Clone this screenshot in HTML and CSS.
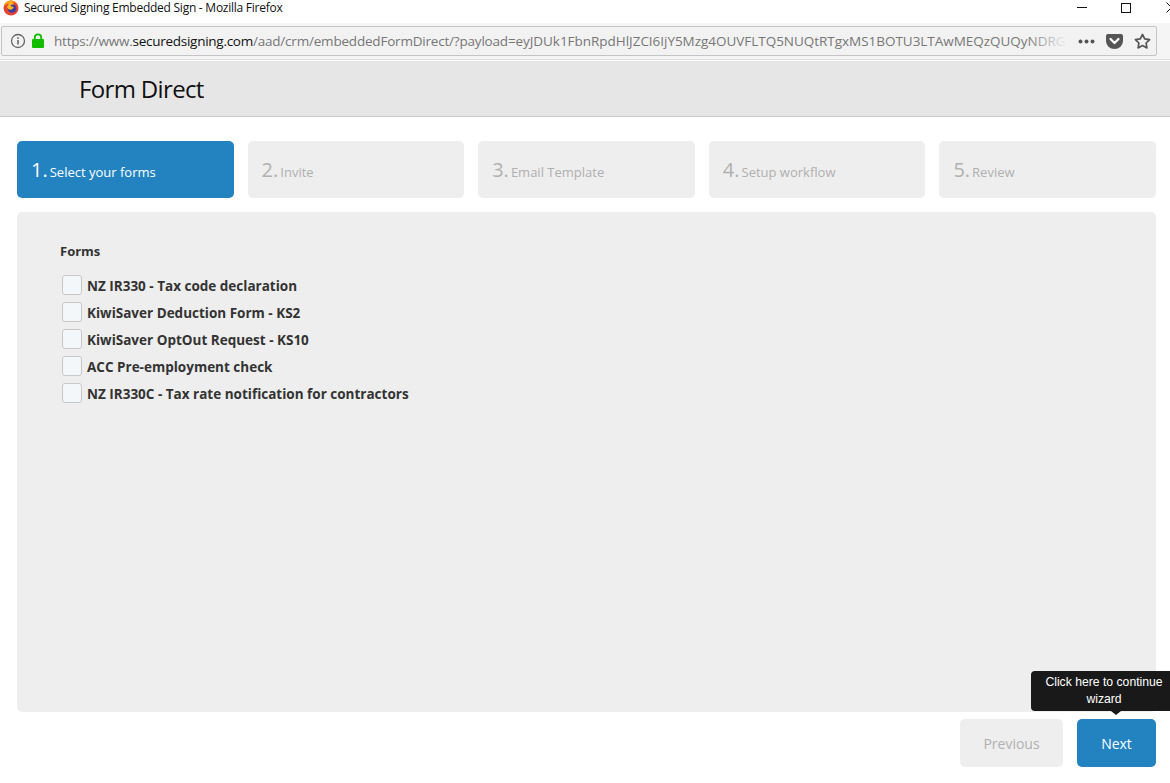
FILE: index.html
```html
<!DOCTYPE html>
<html lang="en">
<head>
<meta charset="utf-8">
<title>Secured Signing Embedded Sign - Mozilla Firefox</title>
<link rel="stylesheet" href="styles.css">
</head>
<body>
<div class="titlebar">
  <svg class="fx-logo" width="16" height="16" viewBox="0 0 16 16">
    <circle cx="8" cy="8" r="7.500" fill="#e8432e"/>
    <path d="M.8 6C1.500 2.800 4.500.5 8 .5c2.500 0 4.500 1 6 3-2-1-5-1.500-7 0C4.500 3.800 2.500 4.500.8 6z" fill="#ff9f1c"/>
    <circle cx="9" cy="8.500" r="4.300" fill="#3f3a9e"/>
    <path d="M6.500 1.500c2.300.5 4 1.700 4.700 3.300C9.700 4.200 8 4.600 7.500 6c.9.700 2.300.5 3.200 1.100-.4 1.800-2.100 2.900-3.900 2.500C5 9.200 4 7.800 4.200 6.200 5 5 6.300 3.800 6.500 1.500z" fill="#ffb81f"/>
  </svg>
  <span class="title-text">Secured Signing Embedded Sign - Mozilla Firefox</span>
  <div class="win-controls">
    <span class="win-min"></span>
    <span class="win-max"></span>
    <svg class="win-close" width="11" height="11" viewBox="0 0 11 11"><path d="M.5.500l10 10M10.500.500l-10 10" stroke="#111" fill="none"/></svg>
  </div>
</div>
<div class="toolbar">
  <div class="urlbar">
    <svg class="ic-info" width="16" height="16" viewBox="0 0 16 16">
      <circle cx="8" cy="8" r="6.500" fill="none" stroke="#666" stroke-width="1.300"/>
      <rect x="7.200" y="7" width="1.600" height="4.500" fill="#666"/>
      <rect x="7.200" y="4.300" width="1.600" height="1.600" fill="#666"/>
    </svg>
    <svg class="ic-lock" width="14" height="15" viewBox="0 0 14 15">
      <rect x="1" y="6" width="12" height="9" rx="1" fill="#12bc00"/>
      <path d="M3.800 6.500V4.500a3.200 3.200 0 0 1 6.400 0v2" fill="none" stroke="#12bc00" stroke-width="1.800"/>
    </svg>
    <div class="url"><span class="url-dim">https://www.</span><span class="url-host">securedsigning.com</span><span class="url-dim">/aad/crm/embeddedFormDirect/?payload=</span><span class="url-dim url-payload">eyJDUk1FbnRpdHlJZCI6IjY5Mzg4OUVFLTQ5NUQtRTgxMS1BOTU3LTAwMEQzQUQyNDRG</span><span class="url-fade"></span></div>
    <div class="url-actions">
      <svg width="17" height="5" viewBox="0 0 17 5"><circle cx="2.500" cy="2.500" r="2" fill="#555"/><circle cx="8.500" cy="2.500" r="2" fill="#555"/><circle cx="14.500" cy="2.500" r="2" fill="#555"/></svg>
      <svg width="17" height="15" viewBox="0 0 17 15"><path d="M2 0h13a2 2 0 0 1 2 2v5a8.500 8 0 0 1-17 0V2a2 2 0 0 1 2-2z" fill="#555"/><path d="M4.500 5l4 4 4-4" fill="none" stroke="#fff" stroke-width="2.200" stroke-linecap="round" stroke-linejoin="round"/></svg>
      <svg width="17" height="16" viewBox="0 0 17 16"><path d="M8.500 1.400l2.200 4.500 4.900.7-3.500 3.400.8 4.900-4.400-2.300-4.400 2.300.8-4.900L1.400 6.600l4.900-.7z" fill="none" stroke="#555" stroke-width="1.700" stroke-linejoin="round"/></svg>
    </div>
  </div>
</div>
<header class="page-header"><h1>Form Direct</h1></header>
<main class="content">
  <ol class="steps">
    <li class="step step-active"><span class="num">1.</span> Select your forms</li>
    <li class="step"><span class="num">2.</span> Invite</li>
    <li class="step"><span class="num">3.</span> Email Template</li>
    <li class="step"><span class="num">4.</span> Setup workflow</li>
    <li class="step"><span class="num">5.</span> Review</li>
  </ol>
  <section class="panel">
    <h2>Forms</h2>
    <ul class="forms">
      <li><span class="check"></span>NZ IR330 - Tax code declaration</li>
      <li><span class="check"></span>KiwiSaver Deduction Form - KS2</li>
      <li><span class="check"></span>KiwiSaver OptOut Request - KS10</li>
      <li><span class="check"></span>ACC Pre-employment check</li>
      <li><span class="check"></span>NZ IR330C - Tax rate notification for contractors</li>
    </ul>
  </section>
  <div class="actions">
    <button class="btn btn-disabled">Previous</button>
    <div class="next-wrap">
      <div class="tooltip">Click here to continue wizard</div>
      <button class="btn btn-primary">Next</button>
    </div>
  </div>
</main>
</body>
</html>
```

FILE: styles.css
```css
* { box-sizing: border-box; }
html, body { margin: 0; padding: 0; }
body {
  width: 1170px;
  height: 783px;
  overflow: hidden;
  background: #fff;
  font-family: "Open Sans", "Noto Sans", sans-serif;
  color: #333;
}
.titlebar {
  height: 23px;
  display: flex;
  align-items: center;
  padding-left: 3px;
  position: relative;
  background: #fff;
}
.fx-logo { flex: none; margin-top: -7px; }
.title-text {
  margin-left: 5px;
  margin-top: -8px;
  font-size: 12px;
  letter-spacing: -0.25px;
  color: #111;
  white-space: nowrap;
}
.win-controls {
  margin-left: auto;
  display: flex;
  align-items: center;
  height: 14px;
  margin-top: -8px;
  width: 100px;
  padding-left: 7px;
  overflow: hidden;
}
.win-min { width: 10px; height: 1px; background: #111; flex: none; }
.win-max { width: 10px; height: 10px; border: 1px solid #111; flex: none; margin-left: 34px; }
.win-close { flex: none; margin-left: 35px; }
.toolbar {
  height: 37px;
  padding: 3px 14px 0 1px;
  background: #f5f5f5;
  border-bottom: 1px solid #dcdcdc;
  box-shadow: 0 1px 0 #fff;
}
.urlbar {
  height: 30px;
  width: 1156px;
  display: flex;
  align-items: center;
  background: #f2f2f2;
  border: 1px solid #c4c4c4;
  border-radius: 2px;
  padding: 0 5px 0 8px;
}
.ic-lock { margin-left: 5px; margin-top: -1px; flex: none; }
.url {
  margin-left: 9px;
  flex: 1;
  min-width: 0;
  overflow: hidden;
  white-space: nowrap;
  position: relative;
  font-size: 13.5px;
  letter-spacing: -0.2px;
  color: #777;
}
.url-host { color: #111; letter-spacing: -0.27px; }
.url-payload { letter-spacing: -0.03px; }
.url-fade {
  position: absolute;
  right: 0;
  top: 0;
  bottom: 0;
  width: 42px;
  background: linear-gradient(to right, rgba(242,242,242,0), #f2f2f2);
}
.url-actions {
  display: flex;
  align-items: center;
  gap: 11px;
  margin-left: 10px;
  flex: none;
}
.page-header {
  height: 56px;
  margin-top: 1px;
  background: #e6e6e6;
  border-bottom: 1px solid #c8c8c8;
  display: flex;
  align-items: center;
  padding-left: 79px;
}
.page-header h1 {
  margin: 0;
  font-size: 24px;
  font-weight: 400;
  color: #111;
  letter-spacing: -0.65px;
}
.content { padding: 24px 14px 0 17px; }
.steps {
  list-style: none;
  margin: 0;
  padding: 0;
  display: grid;
  grid-template-columns: repeat(5, 1fr);
  gap: 14px;
  width: 1139px;
}
.step {
  height: 57px;
  background: #eee;
  border-radius: 5px;
  display: flex;
  align-items: center;
  gap: 2px;
  padding-left: 14px;
  font-size: 13px;
  color: #b0b0b0;
  white-space: nowrap;
  padding-top: 4px;
}
.step .num { font-size: 20px; margin-top: -5px; }
.step-active { background: #2283c0; color: #fff; }
.panel {
  margin-top: 14px;
  width: 1139px;
  height: 500px;
  background: #eee;
  border-radius: 5px;
  padding: 30px 43px;
}
.panel h2 {
  margin: 0 0 12px;
  font-size: 13px;
  line-height: 18px;
  font-weight: 700;
  color: #333;
}
.forms { list-style: none; margin: 0; padding: 0 0 0 2px; }
.forms li {
  height: 27px;
  display: flex;
  align-items: center;
  gap: 5px;
  font-size: 13.5px;
  font-weight: 700;
  color: #333;
  white-space: nowrap;
}
.check {
  width: 20px;
  height: 20px;
  background: #f4f7fa;
  border: 1px solid #c8c8c8;
  border-radius: 3px;
  flex: none;
  margin-top: -2px;
}
.actions {
  margin-top: 7px;
  width: 1139px;
  display: flex;
  justify-content: flex-end;
  gap: 14px;
}
.btn {
  height: 48px;
  border: 0;
  border-radius: 5px;
  font-family: inherit;
  font-size: 14px;
}
.btn-disabled { width: 103px; background: #eee; color: #b0b0b0; }
.btn-primary { width: 79px; background: #2283c0; color: #fff; display: block; }
.next-wrap { position: relative; }
.tooltip {
  position: absolute;
  left: -46px;
  top: -48px;
  width: 146px;
  height: 40px;
  background: #191919;
  color: #fff;
  border-radius: 4px;
  padding: 3px 10px 0;
  font-family: "Liberation Sans", sans-serif;
  font-size: 12.2px;
  line-height: 17px;
  text-align: center;
}
.tooltip::after {
  content: "";
  position: absolute;
  left: 80px;
  bottom: -4px;
  border: 5px solid transparent;
  border-bottom: 0;
  border-top: 4px solid #191919;
}
```
